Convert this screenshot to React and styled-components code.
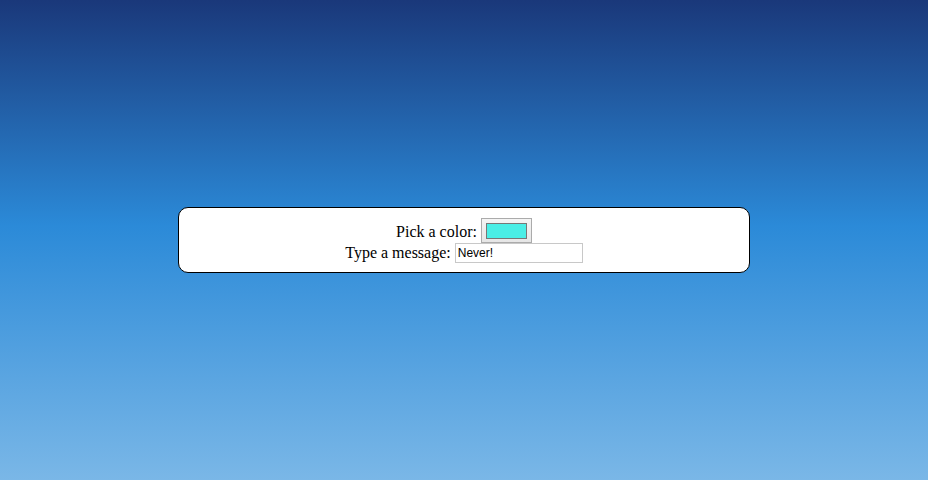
import React, { useState } from "react";
import styled, { createGlobalStyle } from "styled-components";

const GlobalStyle = createGlobalStyle`
    html, body, #root {
        margin: 0;
        height: 100%;
    }
    body {
        font-family: "Liberation Serif", "Times New Roman", serif;
        background: linear-gradient(to bottom, #1a387a 0%, #2b8ad8 47%, #7ab7e7 100%);
    }
`

const Page = styled.div`
    height: 100%;
    display: flex;
    align-items: center;
    justify-content: center;
`

const Panel = styled.div`
    box-sizing: border-box;
    width: 572px;
    height: 66px;
    padding: 10px 0;
    background-color: #fff;
    border: 1px solid #000;
    border-radius: 10px;
    display: flex;
    flex-direction: column;
    align-items: center;
    font-size: 16px;
    color: #000;
`

const Row = styled.div`
    display: flex;
    align-items: center;
    gap: 4px;
`

const Label = styled.label`
    line-height: 18px;
    padding-top: ${props => props.offset || 0}px;
`

const SwatchButton = styled.div`
    box-sizing: border-box;
    width: 51px;
    height: 25px;
    border: 1px solid #ababab;
    background: linear-gradient(to bottom, #f4f4f4, #e6e6e6);
    display: flex;
    align-items: center;
    justify-content: center;
    cursor: pointer;
`

const Swatch = styled.div`
    box-sizing: border-box;
    width: 41px;
    height: 16px;
    border: 1px solid #777;
    background-color: ${props => props.color};
`

const TextField = styled.input`
    box-sizing: border-box;
    width: 128px;
    height: 20px;
    margin: 0;
    padding: 1px 2px;
    border: 1px solid #c8c8c8;
    font-family: "Liberation Sans", Arial, sans-serif;
    font-size: 12px;
    color: #000;
    outline: none;
`

const App = () => {
    const [color] = useState("#4aeee6");
    const [message, setMessage] = useState("Never!");

    return (
        <Page>
            <GlobalStyle />
            <Panel>
                <Row>
                    <Label offset={2}>Pick a color:</Label>
                    <SwatchButton>
                        <Swatch color={color} />
                    </SwatchButton>
                </Row>
                <Row>
                    <Label>Type a message:</Label>
                    <TextField value={message} onChange={e => setMessage(e.target.value)} />
                </Row>
            </Panel>
        </Page>
    )
}

export default App;
